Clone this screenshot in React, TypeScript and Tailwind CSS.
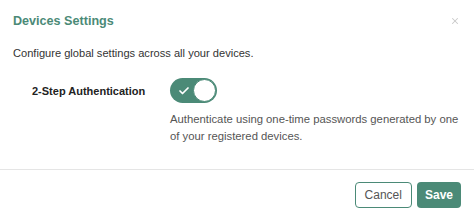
import { Check, X } from "lucide-react";

export default function App() {
  return (
    <div className="w-[474px] h-[221px] bg-white flex flex-col font-['Liberation_Sans',Arial,sans-serif] overflow-hidden">
      {/* header */}
      <div className="flex items-center justify-between pl-[13px] pr-[14px] pt-[4px] h-[38px]">
        <h1 className="text-[12.6px] font-bold text-[#4b8a77]">Devices Settings</h1>
        <X size={10} strokeWidth={2.5} className="text-[#c9c9c9]" />
      </div>

      {/* body */}
      <div className="px-[13px] pt-[6px] flex-1">
        <p className="text-[11.1px] leading-[18px] text-[#333]">Configure global settings across all your devices.</p>

        <div className="flex mt-[16px]">
          <div className="w-[157px] pl-[19px] pt-[4px] text-[11px] leading-[18px] font-bold text-[#222]">
            2-Step Authentication
          </div>
          <div className="flex-1">
            <button className="relative w-[47px] h-[25px] rounded-full bg-[#4b8a77] flex items-center">
              <Check size={12} strokeWidth={3.5} className="text-white ml-[8px]" />
              <span className="absolute right-[1px] top-[1px] w-[23px] h-[23px] rounded-full bg-white border border-[#4b8a77]" />
            </button>
            <p className="mt-[8px] text-[11.3px] leading-[17px] text-[#555]">
              Authenticate using one-time passwords generated by one
              <br />
              of your registered devices.
            </p>
          </div>
        </div>
      </div>

      {/* footer */}
      <div className="border-t border-[#e5e5e5] h-[52px] flex items-center justify-end gap-[5px] pr-[13px] pb-[1px]">
        <button className="h-[26px] px-[9px] rounded-[4px] border border-[#4b8a77] bg-white text-[12px] text-[#555]">
          Cancel
        </button>
        <button className="h-[26px] px-[8px] rounded-[4px] bg-[#4b8a77] text-[12px] font-bold text-white">
          Save
        </button>
      </div>
    </div>
  );
}
